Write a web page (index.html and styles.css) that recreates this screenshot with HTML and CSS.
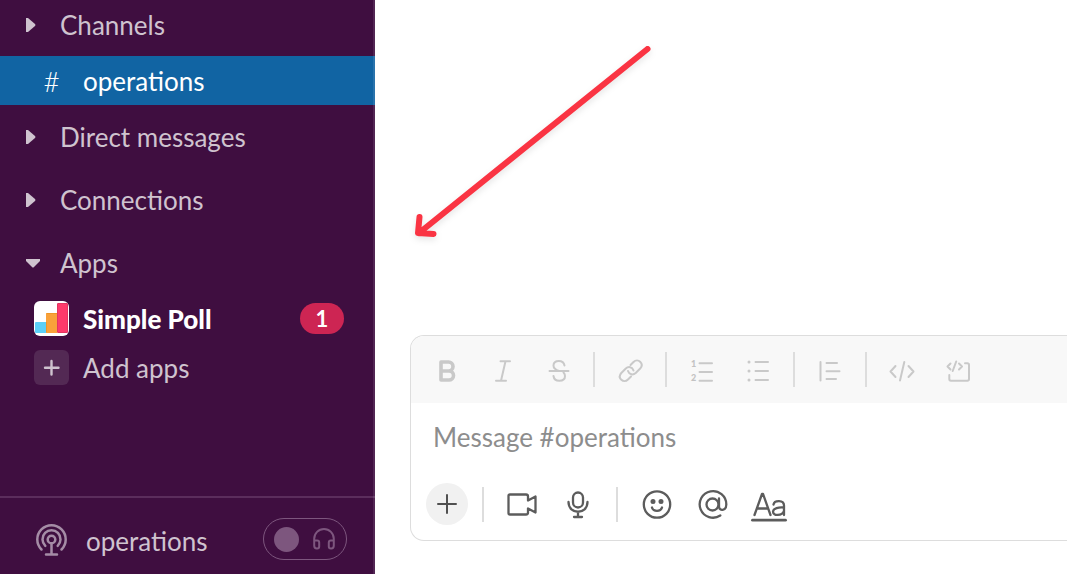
FILE: index.html
```html
<!DOCTYPE html>
<html lang="en">
<head>
<meta charset="utf-8">
<meta name="viewport" content="width=device-width, initial-scale=1">
<title>operations</title>
<link rel="stylesheet" href="styles.css">
</head>
<body>
<div class="app">
  <aside class="sidebar">
    <nav class="nav">
      <section class="group open">
        <button class="row heading" type="button"><svg class="caret" viewBox="0 0 16 16"><path d="M1 1v14h2l7-6q1-1 0-2L3 1z"/></svg><span>Channels</span></button>
        <a class="row item active" href="#operations"><span class="hash">#</span><span>operations</span></a>
      </section>
      <section class="group">
        <button class="row heading" type="button"><svg class="caret" viewBox="0 0 16 16"><path d="M1 1v14h2l7-6q1-1 0-2L3 1z"/></svg><span>Direct messages</span></button>
      </section>
      <section class="group">
        <button class="row heading" type="button"><svg class="caret" viewBox="0 0 16 16"><path d="M1 1v14h2l7-6q1-1 0-2L3 1z"/></svg><span>Connections</span></button>
      </section>
      <section class="group open">
        <button class="row heading" type="button"><svg class="caret" viewBox="0 0 16 16"><path d="M1 4h14v2l-6 6q-1 1-2 0L1 6z"/></svg><span>Apps</span></button>
        <div class="list">
          <a class="row item unread" href="#simple-poll">
            <svg class="tile" viewBox="0 0 35 35"><rect width="35" height="35" rx="6" fill="#fff"/><rect x="1" y="21" width="12" height="11" rx="1" fill="#5bd0f7"/><rect x="12" y="12" width="12" height="20" rx="1" fill="#f9a13a"/><path d="M12.500 21v10.500M12.500 12.500H23" stroke="#ef9526" fill="none"/><rect x="23" y="2" width="11" height="30" rx="2" fill="#fd3a6b"/><path d="M23.500 31V3q0-.5.5-.5h9q.5 0 .5.500v28q0 .5-.5.500h-9z" stroke="#e33360" fill="none"/></svg>
            <span>Simple Poll</span><span class="badge">1</span>
          </a>
          <a class="row item" href="#add-apps">
            <svg class="tile" viewBox="0 0 35 35"><rect width="35" height="35" rx="6" fill="#532954"/><path d="M17.500 11v13.500M11 17.800h13.500" stroke="#cfc3cf" stroke-width="2.400" stroke-linecap="round"/></svg>
            <span>Add apps</span>
          </a>
        </div>
      </section>
    </nav>
    <footer class="huddle">
      <svg class="antenna" viewBox="0 0 32 34"><g fill="none" stroke="#a58ca6" stroke-width="2.500" stroke-linecap="round"><circle cx="15.500" cy="17.500" r="3.800"/><path d="M9.300 23.800a9 9 0 1 1 12.400 0M5.500 27.500a14.200 14.200 0 1 1 20 0M15.500 21.500v11M10 32.500h11"/></g></svg>
      <span class="huddle-name">operations</span>
      <button class="toggle" type="button" role="switch" aria-checked="false" aria-label="Huddle">
        <span class="knob"></span>
        <svg class="phones" viewBox="0 0 22 22"><path d="M1.200 15v-4.200a9.700 9.700 0 0 1 19.600 0V15M1.200 15v-2.500h3q2 0 2 2v4q0 2-2 2h-.5q-2.500 0-2.500-3zM20.800 15v-2.500h-3q-2 0-2 2v4q0 2 2 2h.5q2.500 0 2.500-3z" fill="none" stroke="#7d567e" stroke-width="2"/></svg>
      </button>
    </footer>
  </aside>

  <main class="main">
    <svg class="arrow" viewBox="0 0 250 206"><path d="M237.500 9 9 193M8 193l1.500-16M8 193l15.500 1" fill="none" stroke="#fa3443" stroke-width="6" stroke-linecap="round" stroke-linejoin="round"/></svg>
    <form class="composer">
      <div class="toolbar">
        <button class="tool" type="button" aria-label="Bold"><svg viewBox="0 0 56 35"><path stroke-width="3.600" d="M23 10h7.500a4.500 4.500 0 0 1 0 9H23zM23 19h8a4.500 4.500 0 0 1 0 9H23z"/></svg></button>
        <button class="tool" type="button" aria-label="Italic"><svg viewBox="0 0 56 35"><path d="M26.500 9.300h9.500M22 28.700h10M31.500 9.300l-4.500 19.400"/></svg></button>
        <button class="tool" type="button" aria-label="Strikethrough"><svg viewBox="0 0 56 35"><path d="M19.500 19h19M34.500 13.500c-.6-3-3-4.500-5.600-4.500-3.300 0-5.400 1.800-5.400 4.500 0 3 2.500 4.500 5.500 5.500M23.500 24c.4 3 2.800 4.800 5.800 4.800 3.500 0 5.700-2 5.700-4.800 0-1.600-.6-2.700-1.500-3.500"/></svg></button>
        <span class="divider"></span>
        <button class="tool" type="button" aria-label="Link"><svg viewBox="0 0 56 35"><path d="m28.500 13 3-3c4.500-4.500 11 1.500 6.700 6.500l-4.500 4.500c-2.500 2.300-6.500 1.800-7.700-2M29 24.500l-3 3c-4.500 4.500-11-1.500-6.700-6.500l4.500-4.500c2.500-2.300 6.500-1.800 7.700 2"/></svg></button>
        <span class="divider"></span>
        <button class="tool" type="button" aria-label="Ordered list"><svg viewBox="0 0 56 35"><path d="M25.500 11.300H38M25.500 20H38M25.500 28.700H38"/><text x="17" y="15">1</text><text x="17" y="29">2</text></svg></button>
        <button class="tool" type="button" aria-label="Bulleted list"><svg viewBox="0 0 56 35"><path d="M25.500 10H38M25.500 19H38M25.500 28H38"/><path stroke-width="3" d="M19 10h.01M19 19h.01M19 28h.01"/></svg></button>
        <span class="divider"></span>
        <button class="tool" type="button" aria-label="Quote"><svg viewBox="0 0 56 35"><path d="M18.500 10v18.500M24.500 11H35M24.500 19.300h13M24.500 27h9.500"/></svg></button>
        <span class="divider"></span>
        <button class="tool" type="button" aria-label="Code"><svg viewBox="0 0 56 35"><path d="m21.500 14-5 5.500 5 5.500M34.500 14l5 5.500-5 5.500M30.300 10l-4.300 18.500"/></svg></button>
        <button class="tool" type="button" aria-label="Code block"><svg viewBox="0 0 56 35"><path d="m20.500 11.500-3 3 3 3M29 11.500l3 3-3 3M26.200 9.500l-3.500 9.500M19.300 23v4q0 1.700 1.700 1.700h16.300q1.700 0 1.700-1.700V13q0-1.700-1.700-1.700H35"/></svg></button>
      </div>
      <input class="message" type="text" aria-label="Message" placeholder="Message #operations">
      <div class="actions">
        <button class="plus" type="button" aria-label="Attach"><svg viewBox="0 0 42 42"><path d="M21 12v18M12 21h18"/></svg></button>
        <span class="divider"></span>
        <button class="tool dark" type="button" aria-label="Video"><svg viewBox="0 0 56 35"><path d="M16 7.500h16q2 0 2 2v4l7.500-4v16l-7.500-4v4q0 2-2 2H16q-1.500 0-1.500-1.500V9q0-1.500 1.500-1.500z"/></svg></button>
        <button class="tool dark" type="button" aria-label="Microphone"><svg viewBox="0 0 56 35"><rect x="23" y="5.500" width="10" height="15" rx="5"/><path d="M18.500 15c0 13 19 13 19 0M28 25v5M24 30h8"/></svg></button>
        <span class="divider"></span>
        <button class="tool dark" type="button" aria-label="Emoji"><svg viewBox="0 0 56 35"><circle cx="29" cy="17.500" r="13.200"/><path d="M24 20.500c1.500 4.600 8.500 4.600 10 0"/><path stroke-width="5" d="M25 14.500h.01M33 14.500h.01"/></svg></button>
        <button class="tool dark" type="button" aria-label="Mention"><svg viewBox="0 0 56 35"><circle cx="28.500" cy="17.500" r="6"/><path d="M35 11.500v8c0 5 7.300 4.500 7.300-2a13.300 13.300 0 1 0-6 11"/></svg></button>
        <button class="tool dark" type="button" aria-label="Formatting" aria-pressed="true"><svg viewBox="0 0 56 35"><path d="m14.500 28 7.500-21h1l7.500 21M17 21.500h11M33.500 17.500c.8-4.500 10.500-5 10.500 1V28M44 20.500c-5-.5-11 .5-11 4.300 0 4.500 9 4.200 11-1"/><path d="M12.500 33.200h33" stroke-width="2.800"/></svg></button>
      </div>
    </form>
  </main>
</div>
</body>
</html>
```
FILE: styles.css
```css
* { box-sizing: border-box; }

body {
  margin: 0;
  font-family: Lato, "Liberation Sans", sans-serif;
  font-size: 26px;
  line-height: 32px;
}

button, input { font: inherit; }

button {
  padding: 0;
  border: 0;
  background: none;
  color: inherit;
}

svg { display: block; flex: none; }

.app {
  display: grid;
  grid-template-columns: 375px 1fr;
  min-height: 100vh;
}

.sidebar {
  position: relative;
  display: flex;
  flex-direction: column;
  background: #3f0e40;
  color: #cfc3cf;
}

.sidebar::after {
  content: "";
  position: absolute;
  inset: 0 0 0 auto;
  width: 2px;
  background: rgba(255, 255, 255, 0.1);
}

.nav {
  flex: 1;
  display: flex;
  flex-direction: column;
}

.group { padding-bottom: 14px; }
.group.open { display: grid; gap: 7px; padding-bottom: 7px; }

.row {
  display: flex;
  align-items: center;
  width: 100%;
  height: 49px;
  color: inherit;
  text-align: left;
  text-decoration: none;
}

.heading { gap: 19px; padding: 0 25px; }
.caret { width: 16px; height: 16px; fill: #cfc3cf; }

.item { gap: 14px; padding: 0 31px 0 34px; }
.active { background: #1164a3; color: #fff; }
.hash { width: 35px; font-size: 28px; font-weight: 300; text-align: center; }
.tile { width: 35px; height: 35px; }
.unread { color: #fff; font-weight: 900; }

.badge {
  min-width: 44px;
  margin-left: auto;
  border-radius: 16px;
  background: #cd2553;
  font-size: 22px;
  font-weight: 700;
  line-height: 31px;
  text-align: center;
}

.huddle {
  display: flex;
  align-items: center;
  gap: 18px;
  padding: 20px 28px 14px 36px;
  border-top: 2px solid #5b2d5c;
}

.huddle-name { padding-top: 3px; }

.antenna { width: 32px; height: 34px; }

.toggle {
  display: flex;
  align-items: center;
  justify-content: space-between;
  width: 84px;
  height: 42px;
  margin-left: auto;
  padding: 0 11px 0 10px;
  border: 1px solid #7d567e;
  border-radius: 21px;
}

.knob {
  width: 25px;
  height: 25px;
  border-radius: 50%;
  background: #7d567e;
}

.phones { width: 22px; height: 22px; }

.main {
  position: relative;
  display: flex;
  flex-direction: column;
  justify-content: flex-end;
  padding: 0 0 33px 35px;
  background: #fff;
}

.arrow {
  position: absolute;
  top: 40px;
  left: 35px;
  width: 250px;
  height: 206px;
  filter: drop-shadow(0 3px 3px rgba(0, 0, 0, 0.1));
}

.composer {
  overflow: hidden;
  border: 1px solid #dddddd;
  border-right: 0;
  border-radius: 14px 0 0 14px;
}

.toolbar {
  display: flex;
  padding: 16px 7px;
  background: #f8f8f8;
}

.tool svg {
  width: 56px;
  height: 35px;
  fill: none;
  stroke: #c9c9c9;
  stroke-width: 2;
  stroke-linecap: round;
  stroke-linejoin: round;
}

.tool text {
  fill: #c2c2c2;
  stroke: none;
  font-size: 9px;
  font-weight: 900;
}

.tool.dark svg { stroke: #5c5c5c; stroke-width: 2.3px; }

.divider {
  width: 2px;
  height: 35px;
  margin: 0 7px;
  background: #dddddd;
}

.message {
  display: block;
  width: 100%;
  height: 80px;
  padding: 0 22px 12px;
  border: 0;
  outline: 0;
  background: none;
  color: #1d1c1d;
}

.message::placeholder { color: #8d8d8d; opacity: 1; }

.actions {
  display: flex;
  align-items: center;
  padding: 0 15px 15px;
}

.actions .divider { margin: 0 10px; }

.plus {
  margin-right: 4px;
  border-radius: 50%;
  background: #f1f1f1;
}

.plus svg {
  width: 42px;
  height: 42px;
  stroke: #505050;
  stroke-width: 2;
  stroke-linecap: round;
}
```
